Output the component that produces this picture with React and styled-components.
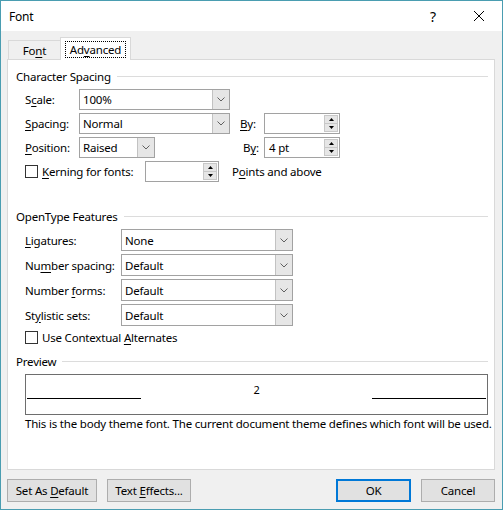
import React from 'react';
import styled, { createGlobalStyle } from 'styled-components';

const GlobalStyle = createGlobalStyle`
  html, body {
    margin: 0;
    padding: 0;
    background: #fff;
  }
  body {
    font-family: "Segoe UI", "Noto Sans", sans-serif;
    font-size: 11.5px;
    letter-spacing: -0.2px;
    color: #000;
  }
  * {
    box-sizing: border-box;
  }
`

const Window = styled.div`
  width: 503px;
  height: 510px;
  border: 1px solid #4a9db1;
  display: flex;
  flex-direction: column;
  background: #f0f0f0;
`

const TitleBar = styled.div`
  height: 30px;
  flex: none;
  background: #fff;
  display: flex;
  align-items: center;
  padding-left: 8px;
  font-size: 12px;
`

const Title = styled.div`
  flex: 1;
`

const TitleButton = styled.div`
  width: 46px;
  height: 30px;
  display: flex;
  align-items: center;
  justify-content: center;
  font-size: 14px;
`

const Body = styled.div`
  flex: 1;
  display: flex;
  flex-direction: column;
  padding: 0 7px 7px 6px;
`

const TabStrip = styled.div`
  height: 28px;
  flex: none;
  display: flex;
  align-items: flex-end;
  padding-left: 1px;
`

const Tab = styled.div`
  height: ${p => (p.$active ? '23px' : '19px')};
  width: ${p => p.$w}px;
  display: flex;
  align-items: center;
  justify-content: center;
  background: ${p => (p.$active ? '#fff' : '#f0f0f0')};
  border: 1px solid #d9d9d9;
  border-bottom: none;
  border-right: ${p => (p.$active ? '1px solid #d9d9d9' : 'none')};
  margin-bottom: ${p => (p.$active ? '-1px' : '0')};
  position: relative;
  z-index: ${p => (p.$active ? 1 : 0)};
`

const FocusLabel = styled.span`
  border: 1px dotted #000;
  padding: 0 4px;
  line-height: 15px;
`

const Panel = styled.div`
  height: 411px;
  flex: none;
  background: #fff;
  border: 1px solid #d9d9d9;
  padding: 0 6px 0 8px;
  display: flex;
  flex-direction: column;
`

const SectionHead = styled.div`
  height: 16px;
  margin-top: ${p => p.$top}px;
  display: flex;
  align-items: center;
  gap: 6px;
  white-space: nowrap;

  &::after {
    content: '';
    flex: 1;
    height: 1px;
    background: #dcdcdc;
  }
`

const FormGrid = styled.div`
  margin-top: 5px;
  padding-left: 9px;
  display: grid;
  grid-template-columns: ${p => p.$cols};
  grid-auto-rows: ${p => p.$row}px;
  row-gap: 3px;
  align-items: center;
`

const Label = styled.span`
  white-space: nowrap;
  padding-left: ${p => p.$pad || 0}px;
`

const Key = styled.span`
  text-decoration: underline;
  text-underline-offset: 2px;
`

const SelectBox = styled.div`
  width: ${p => p.$w}px;
  height: 100%;
  border: 1px solid #a2a2a2;
  background: #fff;
  display: flex;
  align-items: center;
`

const SelectValue = styled.span`
  flex: 1;
  padding-left: 3px;
`

const SelectArrow = styled.span`
  width: 17px;
  height: 100%;
  background: #e6e6e6;
  border-left: 1px solid #c2c2c2;
  display: flex;
  align-items: center;
  justify-content: center;
`

const SpinBox = styled.div`
  width: ${p => p.$w}px;
  height: 100%;
  border: 1px solid #a2a2a2;
  background: #fff;
  display: flex;
`

const SpinValue = styled.span`
  flex: 1;
  padding-left: 4px;
  display: flex;
  align-items: center;
`

const SpinButtons = styled.div`
  width: 15px;
  display: flex;
  flex-direction: column;
  padding: 1px 1px 1px 0;
`

const SpinHalf = styled.div`
  flex: 1;
  background: #e6e6e6;
  border: 1px solid #c8c8c8;
  display: flex;
  align-items: center;
  justify-content: center;

  & + & {
    border-top: none;
  }
`

const KernRow = styled.div`
  grid-column: 1 / -1;
  height: 100%;
  display: flex;
  align-items: center;
`

const CheckField = styled.label`
  width: ${p => p.$w || 'auto'};
  display: flex;
  align-items: center;
  gap: 4px;
  white-space: nowrap;
`

const CheckBox = styled.span`
  width: 13px;
  height: 13px;
  flex: none;
  border: 1px solid #333;
  background: #fff;
`

const AfterText = styled.span`
  margin-left: 13px;
`

const CheckRow = styled.div`
  margin-top: 3px;
  height: 16px;
  padding-left: 9px;
  display: flex;
  align-items: center;
`

const PreviewBox = styled.div`
  margin-top: 5px;
  margin-left: 9px;
  height: 41px;
  border: 1px solid #6e6e6e;
  padding: 0 1px;
  display: flex;
  justify-content: space-between;
  align-items: flex-start;
`

const PreviewRule = styled.div`
  width: 114px;
  height: 24px;
  border-bottom: 1px solid #000;
`

const PreviewNumber = styled.span`
  margin-top: 7px;
  font-size: 11px;
  line-height: 16px;
`

const Note = styled.div`
  margin-top: 1px;
  padding-left: 9px;
  height: 16px;
  line-height: 16px;
  white-space: nowrap;
`

const ButtonRow = styled.div`
  margin-top: 9px;
  height: 23px;
  display: flex;
  gap: 10px;
`

const Spacer = styled.div`
  flex: 1;
`

const Button = styled.button`
  width: ${p => p.$w}px;
  height: 23px;
  font: inherit;
  letter-spacing: inherit;
  color: #000;
  background: #e1e1e1;
  border: ${p => (p.$primary ? '2px solid #0078d7' : '1px solid #adadad')};
  padding: 0;
`

const Chevron = () => (
  <svg width="8" height="5" viewBox="0 0 8 5">
    <path d="M0.5 0.5 L4 4 L7.5 0.5" fill="none" stroke="#606060" strokeWidth="1" />
  </svg>
)

const Select = ({ w, value }) => (
  <SelectBox $w={w}>
    <SelectValue>{value}</SelectValue>
    <SelectArrow><Chevron /></SelectArrow>
  </SelectBox>
)

const Spin = ({ w, value }) => (
  <SpinBox $w={w}>
    <SpinValue>{value}</SpinValue>
    <SpinButtons>
      <SpinHalf>
        <svg width="5" height="3" viewBox="0 0 5 3"><path d="M0 3 L2.5 0 L5 3 Z" fill="#000" /></svg>
      </SpinHalf>
      <SpinHalf>
        <svg width="5" height="3" viewBox="0 0 5 3"><path d="M0 0 L2.5 3 L5 0 Z" fill="#000" /></svg>
      </SpinHalf>
    </SpinButtons>
  </SpinBox>
)

export default function App() {
  return (
    <>
      <GlobalStyle />
      <Window>
        <TitleBar>
          <Title>Font</Title>
          <TitleButton>?</TitleButton>
          <TitleButton>
            <svg width="10" height="10" viewBox="0 0 10 10">
              <path d="M0 0 L10 10 M10 0 L0 10" stroke="#000" strokeWidth="1" />
            </svg>
          </TitleButton>
        </TitleBar>
        <Body>
          <TabStrip>
            <Tab $w={52}>Fo<Key>n</Key>t</Tab>
            <Tab $w={71} $active>
              <FocusLabel>Ad<Key>v</Key>anced</FocusLabel>
            </Tab>
          </TabStrip>
          <Panel>
            <SectionHead $top={8}>Character Spacing</SectionHead>
            <FormGrid $cols="54px 151px 34px 76px" $row={21}>
              <Label>S<Key>c</Key>ale:</Label>
              <Select w={151} value="100%" />
              <span />
              <span />

              <Label><Key>S</Key>pacing:</Label>
              <Select w={151} value="Normal" />
              <Label $pad={10}><Key>B</Key>y:</Label>
              <Spin w={76} value="" />

              <Label><Key>P</Key>osition:</Label>
              <Select w={76} value="Raised" />
              <Label $pad={13}>B<Key>y</Key>:</Label>
              <Spin w={76} value="4 pt" />

              <KernRow>
                <CheckField $w="120px">
                  <CheckBox />
                  <span><Key>K</Key>erning for fonts:</span>
                </CheckField>
                <Spin w={74} value="" />
                <AfterText>P<Key>o</Key>ints and above</AfterText>
              </KernRow>
            </FormGrid>

            <SectionHead $top={26}>OpenType Features</SectionHead>
            <FormGrid $cols="96px 172px" $row={22}>
              <Label><Key>L</Key>igatures:</Label>
              <Select w={172} value="None" />
              <Label>Nu<Key>m</Key>ber spacing:</Label>
              <Select w={172} value="Default" />
              <Label>Number <Key>f</Key>orms:</Label>
              <Select w={172} value="Default" />
              <Label>St<Key>y</Key>listic sets:</Label>
              <Select w={172} value="Default" />
            </FormGrid>
            <CheckRow>
              <CheckField>
                <CheckBox />
                <span>Use Contextual <Key>A</Key>lternates</span>
              </CheckField>
            </CheckRow>

            <SectionHead $top={8}>Preview</SectionHead>
            <PreviewBox>
              <PreviewRule />
              <PreviewNumber>2</PreviewNumber>
              <PreviewRule />
            </PreviewBox>
            <Note>This is the body theme font. The current document theme defines which font will be used.</Note>
          </Panel>
          <ButtonRow>
            <Button $w={90}>Set As <Key>D</Key>efault</Button>
            <Button $w={84}>Text <Key>E</Key>ffects...</Button>
            <Spacer />
            <Button $w={75} $primary>OK</Button>
            <Button $w={74}>Cancel</Button>
          </ButtonRow>
        </Body>
      </Window>
    </>
  )
}
